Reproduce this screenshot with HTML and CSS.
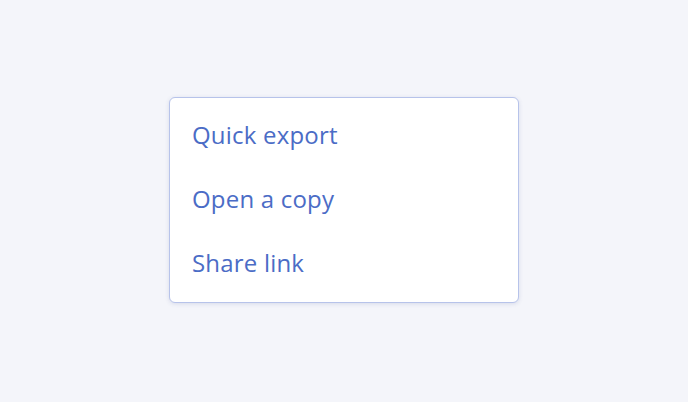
FILE: index.html
```html
<!DOCTYPE html>
<html lang="en">
<head>
<meta charset="utf-8">
<title>Menu</title>
<link rel="stylesheet" href="styles.css">
</head>
<body>
<main class="stage">
  <ul class="menu" role="menu">
    <li class="menu-item" role="menuitem">Quick export</li>
    <li class="menu-item" role="menuitem">Open a copy</li>
    <li class="menu-item" role="menuitem">Share link</li>
  </ul>
</main>
</body>
</html>
```
FILE: styles.css
```css
html, body {
  margin: 0;
  padding: 0;
  height: 100%;
}
body {
  background: #f4f5fa;
  font-family: "Open Sans", "Liberation Sans", sans-serif;
}
.stage {
  height: 100vh;
  display: flex;
  align-items: center;
  justify-content: center;
  padding-bottom: 2px;
  box-sizing: border-box;
}
.menu {
  list-style: none;
  margin: 0;
  width: 350px;
  box-sizing: border-box;
  padding: 4px 0 8px;
  background: #ffffff;
  border: 1.5px solid #b7c3ea;
  border-radius: 6px;
  box-shadow: 0 1px 4px rgba(60, 80, 150, 0.16);
}
.menu-item {
  height: 64px;
  display: flex;
  align-items: center;
  padding: 0 22px;
  font-size: 24px;
  letter-spacing: 0.2px;
  color: #4b6cc6;
}
```
